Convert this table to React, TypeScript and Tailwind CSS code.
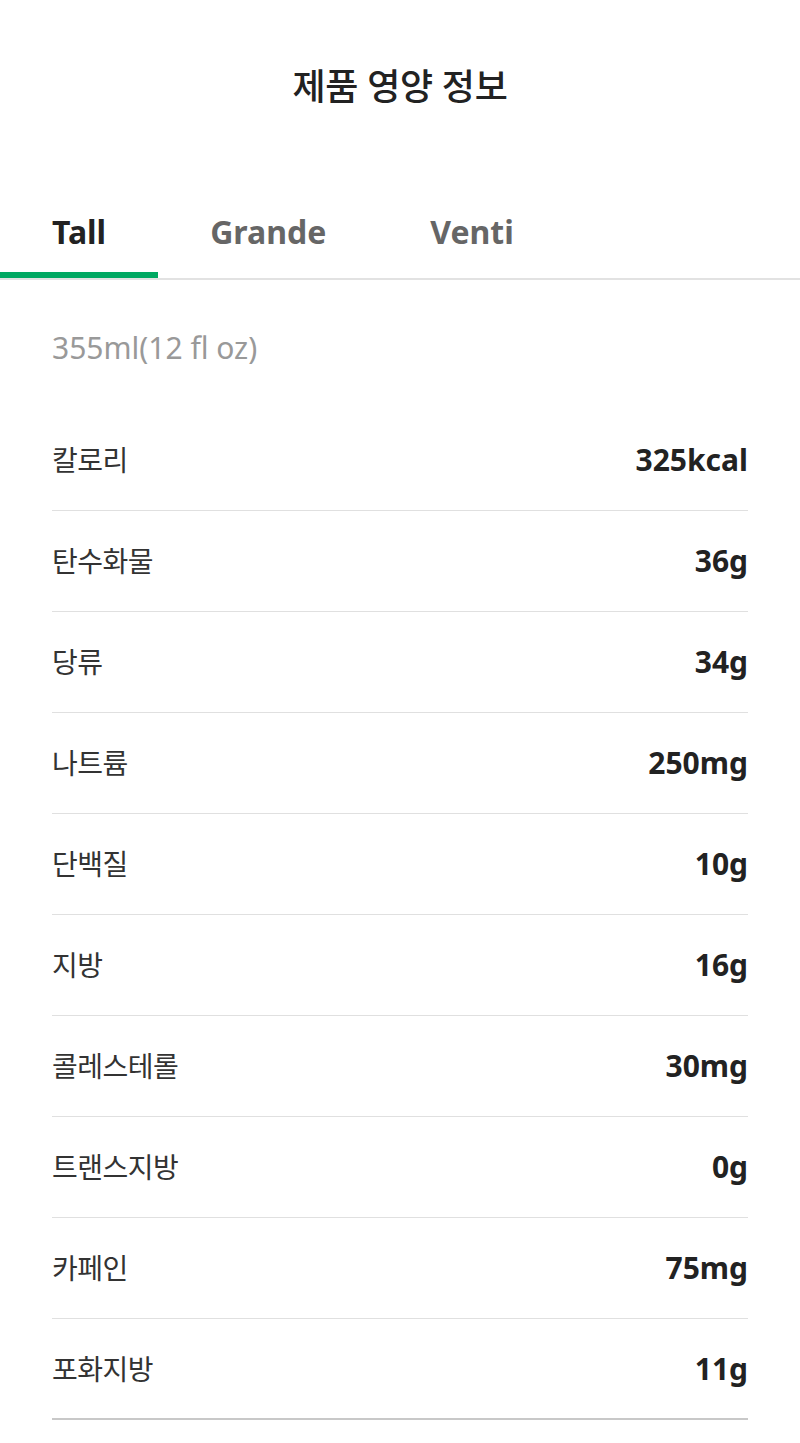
import React, { useState } from 'react'

const sizes = [
  { name: 'Tall', volume: '355ml(12 fl oz)' },
  { name: 'Grande', volume: '473ml(16 fl oz)' },
  { name: 'Venti', volume: '591ml(20 fl oz)' },
]

const nutrition = [
  { label: '칼로리', value: '325kcal' },
  { label: '탄수화물', value: '36g' },
  { label: '당류', value: '34g' },
  { label: '나트륨', value: '250mg' },
  { label: '단백질', value: '10g' },
  { label: '지방', value: '16g' },
  { label: '콜레스테롤', value: '30mg' },
  { label: '트랜스지방', value: '0g' },
  { label: '카페인', value: '75mg' },
  { label: '포화지방', value: '11g' },
]

export default function App() {
  const [active, setActive] = useState(0)

  return (
    <div className="w-[800px] min-h-[1443px] bg-white font-['Noto_Sans','Noto_Sans_CJK_KR',sans-serif] text-[#222]">
      <div className="h-[174px] flex items-center justify-center">
        <h1 className="text-[36px] leading-[44px] font-medium tracking-[-0.3px] text-[#222]">
          제품 영양 정보
        </h1>
      </div>

      <div className="flex h-[104px] border-b-2 border-[#e2e2e2] box-content">
        {sizes.map((size, i) => (
          <button
            key={size.name}
            onClick={() => setActive(i)}
            className="h-full flex flex-col justify-end"
          >
            <span
              className={
                'px-[52px] mb-[20px] text-[32px] leading-[40px] font-bold ' +
                (active === i ? 'text-[#222]' : 'text-[#666]')
              }
            >
              {size.name}
            </span>
            <span className={'h-[6px] w-full ' + (active === i ? 'bg-[#00a862]' : 'bg-transparent')} />
          </button>
        ))}
      </div>

      <div className="px-[52px]">
        <p className="pt-[48px] text-[30px] leading-[40px] text-[#999]">{sizes[active].volume}</p>

        <ul className="mt-[42px]">
          {nutrition.map((row, i) => (
            <li
              key={row.label}
              className={
                'h-[101px] flex items-center justify-between ' +
                (i === nutrition.length - 1 ? 'border-b-2 border-[#c8c8c8]' : 'border-b border-[#e0e0e0]')
              }
            >
              <span className="text-[28px] leading-[40px] tracking-[-0.5px] text-[#333]">{row.label}</span>
              <span className="text-[30px] leading-[40px] font-bold text-[#222]">{row.value}</span>
            </li>
          ))}
        </ul>
      </div>
    </div>
  )
}
